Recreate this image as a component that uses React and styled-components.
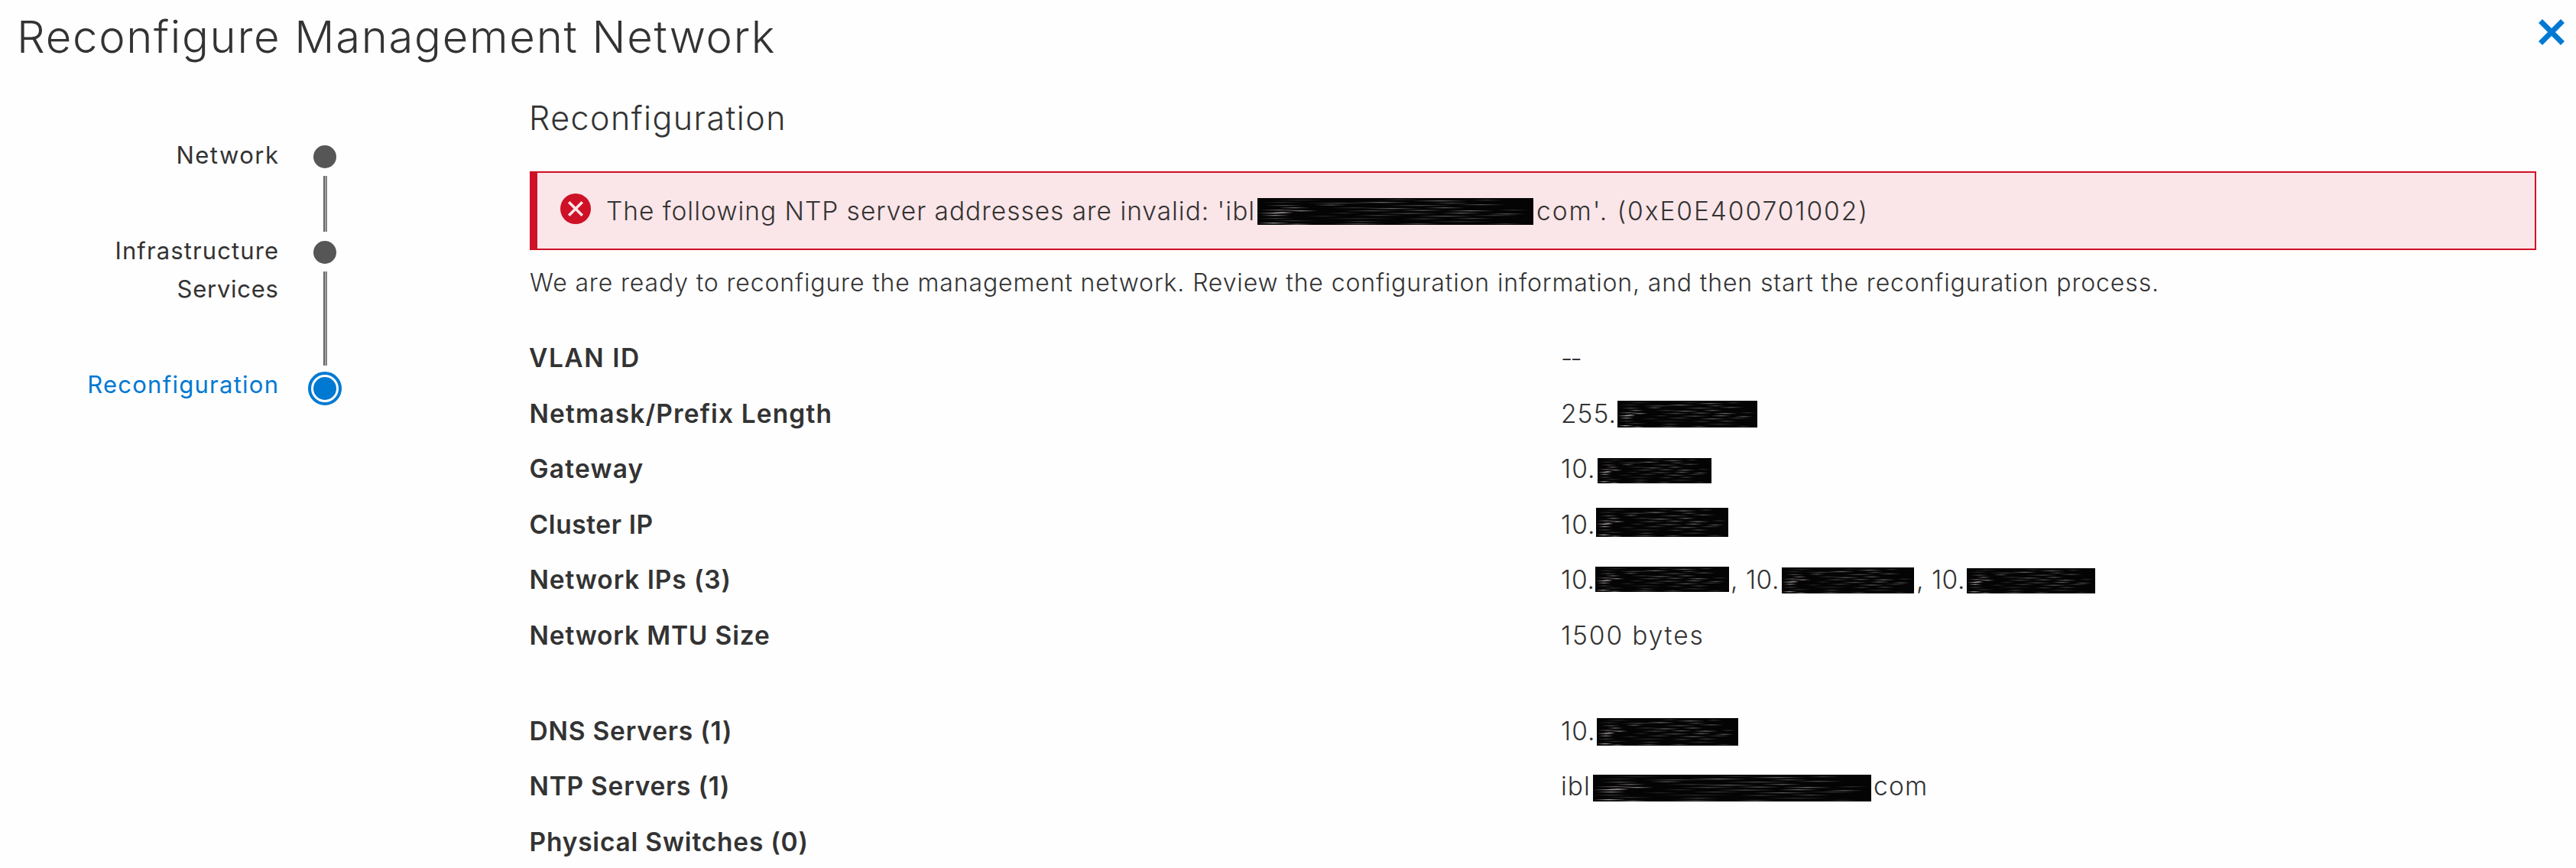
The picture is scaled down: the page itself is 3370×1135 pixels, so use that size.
import React from 'react';
import styled, { createGlobalStyle } from 'styled-components';

const vr = {
  text: '#333333',
  blue: '#0079d3',
  red: '#ce1126',
  pink: '#fae5e8',
  step: '#565656',
}

const GlobalStyle = createGlobalStyle`
  * {
    box-sizing: border-box;
  }

  body {
    margin: 0;
    background: #fefefe;
    color: ${vr.text};
    font-family: Inter, "Liberation Sans", sans-serif;
  }
`

const Wizard = styled.div`
  height: 1135px;
  overflow: hidden;
`

const Header = styled.header`
  display: flex;
  align-items: flex-start;
  justify-content: space-between;
  height: 124px;
  padding: 17px 15px 0 22px;
`

const Title = styled.h1`
  margin: 0;
  padding-top: 1px;
  font-size: 58px;
  font-weight: 300;
  line-height: 60px;
  letter-spacing: 1.69px;
`

const CloseButton = styled.button`
  display: flex;
  margin-top: 8px;
  padding: 0;
  border: 0;
  background: none;
  color: ${vr.blue};
`

const Body = styled.div`
  display: flex;
`

/* Step navigation */

const Steps = styled.ol`
  flex: none;
  width: 693px;
  margin: 0;
  padding: 54px 0 0;
  list-style: none;
`

const Step = styled.li`
  display: flex;
  height: ${p => p.$height}px;
  color: ${p => (p.$current ? vr.blue : vr.text)};
`

const StepLabel = styled.span`
  width: 366px;
  padding-right: 2px;
  font-size: 31px;
  line-height: 50px;
  text-align: right;
`

const Word = styled.span`
  display: block;
  margin-right: -${p => p.$track}px;
  letter-spacing: ${p => p.$track}px;
`

const Track = styled.span`
  display: flex;
  flex-direction: column;
  align-items: center;
  width: 44px;
  margin-left: 37px;
  padding-top: ${p => (p.$current ? 8 : 12)}px;
`

const Dot = styled.span`
  flex: none;
  width: 30px;
  height: 30px;
  border-radius: 50%;
  background: ${vr.step};
`

const CurrentDot = styled.span`
  width: 44px;
  height: 44px;
  padding: 3px;
  border: 4px solid ${vr.blue};
  border-radius: 50%;
  background: ${vr.blue} content-box;
`

const Connector = styled.span`
  width: 5px;
  height: ${p => p.$length}px;
  margin-top: 10px;
  background: linear-gradient(to right, #666 2px, #b4b4b4 2px 3px, #808080 3px);
`

/* Content */

const Main = styled.main`
  width: 2625px;
`

const Heading = styled.h2`
  margin: 0;
  font-size: 43px;
  font-weight: 300;
  line-height: 60px;
  letter-spacing: 1.45px;
  text-indent: -1px;
`

const Alert = styled.div`
  display: flex;
  height: 103px;
  margin-top: 40px;
  padding: 27px 0 0 30px;
  border: 2px solid ${vr.red};
  border-left-width: 10px;
  background: ${vr.pink};
`

const AlertText = styled.p`
  display: flex;
  margin: 0 0 0 20px;
  font-size: 33.5px;
  font-weight: 300;
  line-height: 47px;
`

const Intro = styled.p`
  margin: 18px 0 36px;
  font-size: 32px;
  font-weight: 300;
  line-height: 50px;
  letter-spacing: 0.86px;
  white-space: nowrap;
`

const Group = styled.dl`
  margin: 0 0 52.5px;
`

const Row = styled.div`
  display: grid;
  grid-template-columns: 1349px 1fr;
  height: 72.5px;
  font-size: 33.5px;
  line-height: 75.5px;
`

const Name = styled.dt`
  font-weight: 600;
  letter-spacing: ${p => p.$track}px;
  text-indent: ${p => p.$indent || -0.5}px;
`

const Value = styled.dd`
  display: flex;
  margin: 0;
  font-weight: 300;
`

/* One run of value text; a width fixes where the next run starts */
const Run = styled.span`
  flex: none;
  width: ${p => (p.$width ? p.$width + 'px' : 'auto')};
  padding-left: ${p => p.$gap || 0}px;
  letter-spacing: ${p => p.$track}px;
  white-space: pre;
`

const Bar = styled.svg`
  flex: none;
  display: block;
  width: ${p => p.$width}px;
  height: ${p => p.$height}px;
  margin-top: ${p => p.$top}px;
`

// x, y, length, opacity on a 340 x 35 strip
const STREAKS = [
  [18, 2, 66, 0.18], [150, 1.5, 50, 0.2], [190, 3, 70, 0.5], [262, 2, 40, 0.24],
  [4, 5, 54, 0.2], [60, 6, 80, 0.34], [118, 5, 70, 0.55], [216, 6, 46, 0.35],
  [10, 9, 46, 0.4], [70, 8.5, 40, 0.45], [160, 9, 80, 0.38], [246, 8, 60, 0.4],
  [26, 12, 38, 0.55], [90, 12, 60, 0.25], [130, 13, 70, 0.5], [206, 12, 50, 0.48],
  [2, 15, 50, 0.5], [34, 16, 40, 0.7], [106, 16, 70, 0.34], [176, 15.5, 54, 0.44],
  [232, 16, 60, 0.55], [296, 15, 40, 0.22], [0, 19, 44, 0.85], [18, 18, 26, 0.7],
  [86, 19, 40, 0.2], [150, 19.5, 74, 0.38], [226, 19, 50, 0.5], [284, 20, 46, 0.44],
  [4, 22, 36, 0.7], [60, 23, 44, 0.18], [120, 22, 60, 0.3], [196, 23, 70, 0.46],
  [262, 22, 60, 0.28], [0, 26, 46, 0.28], [80, 26, 90, 0.2], [180, 26.5, 50, 0.28],
  [240, 26, 50, 0.34], [14, 29, 60, 0.24], [104, 30, 50, 0.3], [210, 30, 80, 0.24],
  [0, 32, 40, 0.85], [30, 33.5, 38, 0.5], [90, 33, 70, 0.35], [170, 33, 56, 0.35], [280, 33, 50, 0.24],
]

const Redacted = ({ tint = '#d8dcd8', ...props }) => (
  <Bar viewBox="0 0 340 35" preserveAspectRatio="none" aria-hidden="true" {...props}>
    <defs>
      <linearGradient id="streak">
        <stop offset="0" stopColor={tint} stopOpacity="0" />
        <stop offset="0.5" stopColor={tint} stopOpacity="0.85" />
        <stop offset="1" stopColor={tint} stopOpacity="0" />
      </linearGradient>
    </defs>
    <rect width="340" height="35" fill="#040404" />
    {STREAKS.map(([x, y, w, o]) => (
      <rect key={`${x}-${y}`} x={x} y={y} width={w} height="1.3" fill="url(#streak)" opacity={o} />
    ))}
  </Bar>
)

const CloseIcon = () => (
  <svg width="34" height="34" viewBox="0 0 34 34" fill="none" stroke="currentColor" strokeWidth="7">
    <path d="M2.5 2.5 31.5 31.5M31.5 2.5 2.5 31.5" />
  </svg>
)

const ErrorIcon = () => (
  <svg width="40" height="40" viewBox="0 0 40 40">
    <circle cx="20" cy="20" r="20" fill={vr.red} />
    <path d="M11.2 11.2 28.8 28.8M28.8 11.2 11.2 28.8" stroke={vr.pink} strokeWidth="3.6" />
  </svg>
)

export default function App() {
  return (
    <Wizard>
      <GlobalStyle />
      <Header>
        <Title>Reconfigure Management Network</Title>
        <CloseButton aria-label="Close"><CloseIcon /></CloseButton>
      </Header>
      <Body>
        <Steps>
          <Step $height={125}>
            <StepLabel><Word $track={1.49}>Network</Word></StepLabel>
            <Track><Dot /><Connector $length={75} /></Track>
          </Step>
          <Step $height={175}>
            <StepLabel>
              <Word $track={1.11}>Infrastructure</Word>
              <Word $track={0.74}>Services</Word>
            </StepLabel>
            <Track><Dot /><Connector $length={125} /></Track>
          </Step>
          <Step $height={60} $current>
            <StepLabel><Word $track={1.26}>Reconfiguration</Word></StepLabel>
            <Track $current><CurrentDot /></Track>
          </Step>
        </Steps>
        <Main>
          <Heading>Reconfiguration</Heading>
          <Alert>
            <ErrorIcon />
            <AlertText>
              <Run $width={852} $track={0.98}>The following NTP server addresses are invalid: 'ibl</Run>
              <Redacted $width={361} $height={35} $top={6} tint="#e0d4d6" />
              <Run $gap={4} $track={1.95}>com'. (0xE0E400701002)</Run>
            </AlertText>
          </Alert>
          <Intro>
            We are ready to reconfigure the management network. Review the configuration information, and then start the reconfiguration process.
          </Intro>
          <Group>
            <Row>
              <Name $track={1.53} $indent={-1}>VLAN ID</Name>
              <Value><Run $track={-2.6}>--</Run></Value>
            </Row>
            <Row>
              <Name $track={1.14}>Netmask/Prefix Length</Name>
              <Value>
                <Run $width={74} $track={1.03}>255.</Run>
                <Redacted $width={183} $height={35} $top={20} />
              </Value>
            </Row>
            <Row>
              <Name $track={1.19}>Gateway</Name>
              <Value>
                <Run $width={48} $track={0.99}>10.</Run>
                <Redacted $width={149} $height={33} $top={22.5} />
              </Value>
            </Row>
            <Row>
              <Name $track={0.59}>Cluster IP</Name>
              <Value>
                <Run $width={46} $track={0.99}>10.</Run>
                <Redacted $width={173} $height={38} $top={15} />
              </Value>
            </Row>
            <Row>
              <Name $track={0.89}>Network IPs (3)</Name>
              <Value>
                <Run $width={45} $track={0.7}>10.</Run>
                <Redacted $width={175} $height={33} $top={19.5} />
                <Run $width={69} $gap={2} $track={0.52}>, 10.</Run>
                <Redacted $width={173} $height={34} $top={20.5} />
                <Run $width={69} $gap={3} $track={0.52}>, 10.</Run>
                <Redacted $width={168} $height={33} $top={21.5} />
              </Value>
            </Row>
            <Row>
              <Name $track={0.83}>Network MTU Size</Name>
              <Value><Run $track={1.88}>1500 bytes</Run></Value>
            </Row>
          </Group>
          <Group>
            <Row>
              <Name $track={0.79}>DNS Servers (1)</Name>
              <Value>
                <Run $width={47} $track={0.99}>10.</Run>
                <Redacted $width={185} $height={36} $top={20} />
              </Value>
            </Row>
            <Row>
              <Name $track={0.74}>NTP Servers (1)</Name>
              <Value>
                <Run $width={42} $track={1.01}>ibl</Run>
                <Redacted $width={364} $height={35} $top={21.5} />
                <Run $gap={3} $track={1.21}>com</Run>
              </Value>
            </Row>
            <Row>
              <Name $track={0.79}>Physical Switches (0)</Name>
              <Value />
            </Row>
          </Group>
        </Main>
      </Body>
    </Wizard>
  )
}
